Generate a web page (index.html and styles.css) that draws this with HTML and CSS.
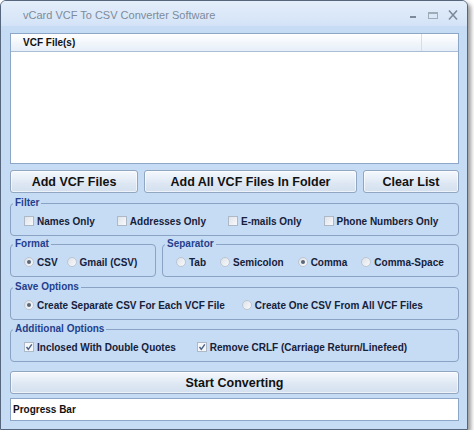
FILE: index.html
```html
<!DOCTYPE html>
<html lang="en">
<head>
    <meta charset="UTF-8">
    <title>vCard VCF To CSV Converter Software</title>
    <link rel="stylesheet" href="styles.css">
</head>
<body>
    <div class="window">
        <div class="titlebar">
            <span class="title">vCard VCF To CSV Converter Software</span>
            <div class="controls">
                <svg class="ctl" width="14" height="12" viewBox="0 0 14 12"><rect x="4" y="7" width="6" height="2" fill="#7d8a99"/></svg>
                <svg class="ctl" width="14" height="12" viewBox="0 0 14 12"><rect x="2.5" y="3.5" width="9" height="6" fill="none" stroke="#a0abb8"/><rect x="2" y="3" width="10" height="2" fill="#a0abb8"/></svg>
                <svg class="ctl" width="14" height="12" viewBox="0 0 14 12"><path d="M3 1.5 L11 10.5 M11 1.5 L3 10.5" stroke="#7d8a99" stroke-width="1.6"/></svg>
            </div>
        </div>
        <div class="client">
            <div class="list">
                <div class="list-head">
                    <span class="col">VCF File(s)</span>
                    <span class="col-end"></span>
                </div>
                <div class="list-body"></div>
            </div>

            <div class="btn-row">
                <button class="btn btn-add">Add VCF Files</button>
                <button class="btn btn-folder">Add All VCF Files In Folder</button>
                <button class="btn btn-clear">Clear List</button>
            </div>

            <fieldset class="group group-filter">
                <legend>Filter</legend>
                <div class="opts filter-opts">
                    <label class="opt"><span class="check"></span>Names Only</label>
                    <label class="opt"><span class="check"></span>Addresses Only</label>
                    <label class="opt"><span class="check"></span>E-mails Only</label>
                    <label class="opt"><span class="check"></span>Phone Numbers Only</label>
                </div>
            </fieldset>

            <div class="group-row">
                <fieldset class="group group-format">
                    <legend>Format</legend>
                    <div class="opts format-opts">
                        <label class="opt"><span class="radio on"></span>CSV</label>
                        <label class="opt"><span class="radio"></span>Gmail (CSV)</label>
                    </div>
                </fieldset>
                <fieldset class="group group-sep">
                    <legend>Separator</legend>
                    <div class="opts sep-opts">
                        <label class="opt"><span class="radio"></span>Tab</label>
                        <label class="opt"><span class="radio"></span>Semicolon</label>
                        <label class="opt"><span class="radio on"></span>Comma</label>
                        <label class="opt"><span class="radio"></span>Comma-Space</label>
                    </div>
                </fieldset>
            </div>

            <fieldset class="group group-save">
                <legend>Save Options</legend>
                <div class="opts save-opts">
                    <label class="opt"><span class="radio on"></span>Create Separate CSV For Each VCF File</label>
                    <label class="opt"><span class="radio"></span>Create One CSV From All VCF Files</label>
                </div>
            </fieldset>

            <fieldset class="group group-extra">
                <legend>Additional Options</legend>
                <div class="opts extra-opts">
                    <label class="opt"><span class="check on"><svg width="8" height="8" viewBox="0 0 8 8"><path d="M1.5 4 L3.3 6.3 L6.8 1.3" fill="none" stroke="#4b6185" stroke-width="1.4"/></svg></span>Inclosed With Double Quotes</label>
                    <label class="opt"><span class="check on"><svg width="8" height="8" viewBox="0 0 8 8"><path d="M1.5 4 L3.3 6.3 L6.8 1.3" fill="none" stroke="#4b6185" stroke-width="1.4"/></svg></span>Remove CRLF (Carriage Return/Linefeed)</label>
                </div>
            </fieldset>

            <button class="btn btn-start">Start Converting</button>
            <div class="progress">Progress Bar</div>
        </div>
    </div>
</body>
</html>
```

FILE: styles.css
```css
body {
    margin: 0;
    background-color: #ffffff;
    font-family: "Liberation Sans", Arial, sans-serif;
}
.window {
    width: 466px;
    height: 428px;
    border: 1px solid #56677d;
    border-radius: 6px 6px 0 0;
    background-color: #c6dbf4;
    box-shadow: 3px 3px 4px rgba(0, 0, 0, 0.4);
}
.titlebar {
    height: 25px;
    display: flex;
    align-items: center;
    justify-content: space-between;
    background: linear-gradient(#e4eefa, #d3e3f7);
    border-radius: 5px 5px 0 0;
}
.title {
    padding-left: 22px;
    padding-top: 3px;
    font-size: 11px;
    color: #7d8b9b;
}
.controls {
    display: flex;
    gap: 6px;
    padding-right: 7px;
    padding-top: 3px;
}
.client {
    padding: 7px 8px 0 9px;
}
.list {
    height: 129px;
    border: 1px solid #8ca6c8;
    background-color: #ffffff;
}
.list-head {
    height: 17px;
    display: flex;
    background: linear-gradient(#ffffff, #e6eef8);
    border-bottom: 1px solid #a9bdd6;
}
.col {
    width: 398px;
    padding-left: 12px;
    font-size: 10px;
    font-weight: bold;
    line-height: 17px;
    color: #111111;
    border-right: 1px solid #d5dde7;
}
.btn-row {
    display: flex;
    gap: 6px;
    margin-top: 6px;
}
.btn {
    height: 23px;
    padding: 0;
    border: 1px solid #91a6c0;
    border-radius: 3px;
    background: linear-gradient(#f6f9fd, #dde7f3 60%, #d4e0ef);
    box-shadow: inset 0 0 0 1px rgba(255, 255, 255, 0.6);
    font-family: "Liberation Sans", Arial, sans-serif;
    font-size: 12.5px;
    font-weight: bold;
    color: #111111;
}
.btn-add {
    width: 128px;
}
.btn-folder {
    width: 213px;
}
.btn-clear {
    width: 96px;
}
.group {
    margin: 0;
    padding: 5px 0 7px 13px;
    border: 1px solid #8aa3c4;
    border-radius: 4px;
    min-width: 0;
}
.group legend {
    padding: 0 2px;
    margin-left: -11px;
    font-size: 10px;
    font-weight: bold;
    line-height: 12px;
    color: #243f8c;
}
.group-filter {
    margin-top: 4px;
}
.group-row {
    display: flex;
    gap: 6px;
    margin-top: 2px;
}
.group-format {
    width: 131px;
}
.group-sep {
    flex: 1;
}
.group-save {
    margin-top: 4px;
}
.group-extra {
    margin-top: 3px;
}
.opts {
    display: flex;
    height: 14px;
    align-items: center;
}
.opt {
    display: flex;
    align-items: center;
    gap: 3px;
    font-size: 10px;
    font-weight: bold;
    color: #16213a;
    white-space: nowrap;
}
.filter-opts {
    gap: 22px;
}
.format-opts {
    gap: 9px;
}
.sep-opts {
    gap: 14px;
}
.save-opts {
    gap: 17px;
}
.extra-opts {
    gap: 21px;
}
.check {
    width: 8px;
    height: 8px;
    border: 1px solid #aeb9c7;
    background: linear-gradient(135deg, #dfe3e9, #f8f9fb);
    display: flex;
    align-items: center;
    justify-content: center;
}
.check.on {
    background: #f4f6f9;
}
.radio {
    width: 8px;
    height: 8px;
    border: 1px solid #bcc6d2;
    border-radius: 50%;
    background: linear-gradient(135deg, #dde2e8, #f8f9fb);
    position: relative;
}
.radio.on::after {
    content: '';
    position: absolute;
    left: 2px;
    top: 2px;
    width: 4px;
    height: 4px;
    border-radius: 50%;
    background-color: #5a6778;
}
.btn-start {
    display: block;
    width: 449px;
    margin-top: 9px;
}
.progress {
    height: 21px;
    margin-top: 4px;
    border: 1px solid #8ca6c8;
    background-color: #ffffff;
    padding-left: 2px;
    font-size: 10px;
    font-weight: bold;
    line-height: 21px;
    color: #111111;
}
```
